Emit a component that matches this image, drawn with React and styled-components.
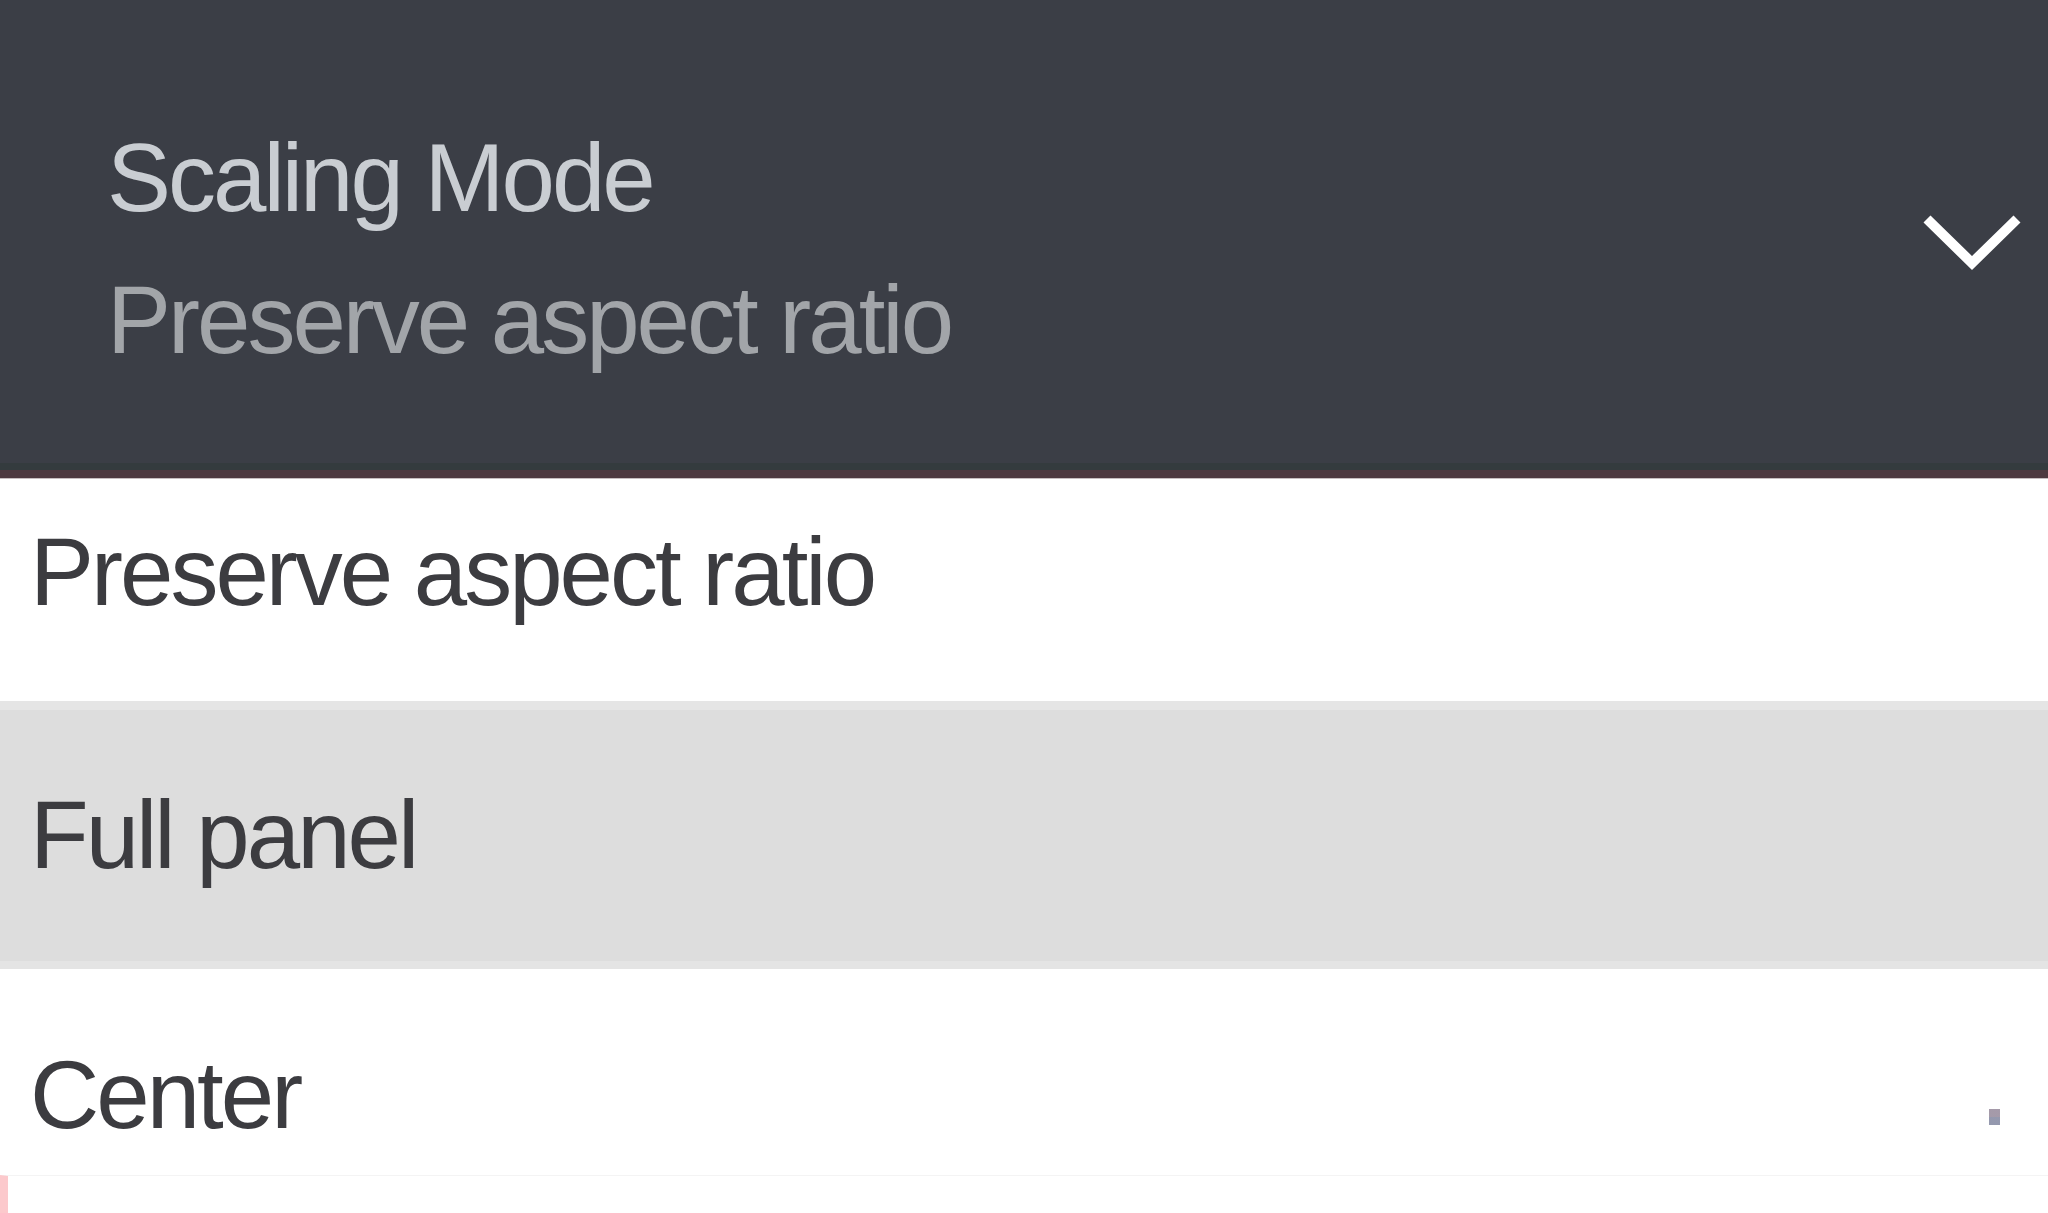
import React from 'react'
import styled, {createGlobalStyle} from 'styled-components'

const Global = createGlobalStyle`
  html, body {
    margin: 0;
    padding: 0;
    background: #ffffff;
  }
  body {
    font-family: "Liberation Sans", Arial, sans-serif;
    overflow: hidden;
  }
`;

const Page = styled.div`
  display: flex;
  flex-direction: column;
  width: 2048px;
  height: 1213px;
  overflow: hidden;
`;

const Header = styled.div`
  display: flex;
  justify-content: space-between;
  align-items: flex-start;
  box-sizing: border-box;
  height: 478px;
  padding: 130px 25px 0 107px;
  background: #3b3e46;
  border-bottom: 8px solid #4d3a40;
  box-shadow: inset 0 -7px 0 #343b3e;
`;

const Labels = styled.div`
  display: flex;
  flex-direction: column;
  gap: 46px;
`;

const Label = styled.div`
  font-size: 96px;
  line-height: 96px;
  letter-spacing: -3px;
  color: ${props => props.sub ? '#a2a5a9' : '#c9cdd2'};
  white-space: nowrap;
`;

const Chevron = styled.svg`
  margin-top: 83px;
  width: 102px;
  height: 58px;
`;

const List = styled.div`
  display: flex;
  flex-direction: column;
  flex: 1;
  border-top: 1px solid #c6bec0;
`;

const Option = styled.div`
  display: flex;
  justify-content: space-between;
  align-items: flex-start;
  box-sizing: border-box;
  height: ${props => props.h}px;
  padding: ${props => props.top}px 48px 0 30px;
  background: ${props => props.active ? '#dddddd' : '#ffffff'};
  border-top: ${props => props.active ? '9px solid #e5e5e5' : 'none'};
  border-bottom: ${props => props.active ? '8px solid #e4e4e4' : 'none'};
  box-shadow: ${props => props.active ? '0 8px 0 #f6f6f6' : 'none'};
  font-size: 96px;
  line-height: 96px;
  letter-spacing: -3px;
  color: #3c3c40;
  white-space: nowrap;
`;

const Marker = styled.span`
  display: block;
  margin-top: 62px;
  width: 11px;
  height: 16px;
  background: linear-gradient(#8e8194 0 50%, #7a7f9a 50% 100%);
  opacity: 0.8;
`;

const Rest = styled.div`
  flex: 1;
  border-top: 1px solid #f4f4f4;
  border-left: 8px solid #fcc9cc;
`;

export default function App() {
  return (
    <Page>
      <Global />
      <Header>
        <Labels>
          <Label>Scaling Mode</Label>
          <Label sub>Preserve aspect ratio</Label>
        </Labels>
        <Chevron viewBox="0 0 102 58">
          <polyline points="6,6 51,50 96,6" fill="none" stroke="#ffffff" strokeWidth="10" />
        </Chevron>
      </Header>
      <List>
        <Option h={222} top={45}>Preserve aspect ratio</Option>
        <Option h={268} top={77} active>Full panel</Option>
        <Option h={206} top={78}>
          Center
          <Marker />
        </Option>
        <Rest />
      </List>
    </Page>
  )
}
